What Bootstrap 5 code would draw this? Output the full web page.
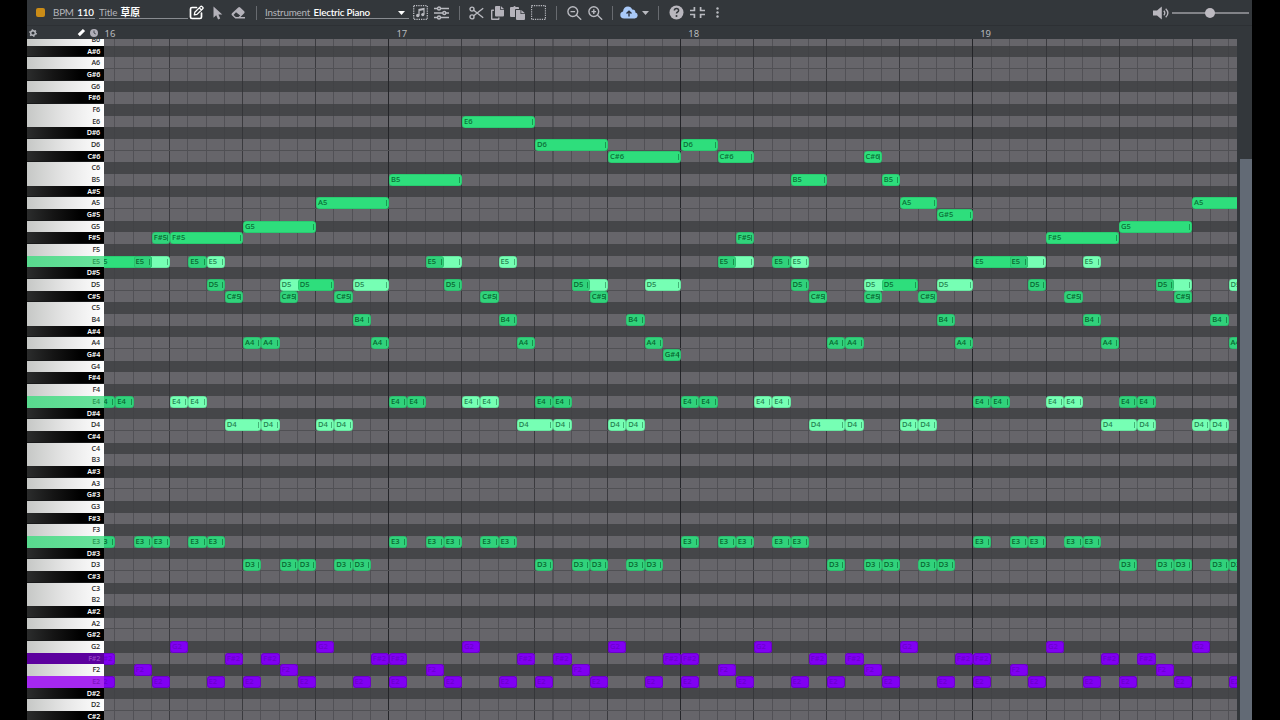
<!DOCTYPE html>
<html lang="en">
<head>
<meta charset="utf-8">
<meta name="viewport" content="width=device-width, initial-scale=1">
<title>Piano roll</title>
<link href="https://cdn.jsdelivr.net/npm/bootstrap@5.3.0/dist/css/bootstrap.min.css" rel="stylesheet">
<style>
:root { --step: 18.26px; --lane: 11.683px; }
body { background: #000; font-family: "Noto Sans", "Noto Sans CJK SC", sans-serif; color: #fff; height: 720px; overflow: hidden; }
.app { width: 1225px; height: 720px; margin-left: 27px; background: #33373b; }
.toolbar { height: 26px; border-bottom: 1px solid #2d3034; color: #b4b5ba; font-family: Lato, "Noto Sans CJK SC", sans-serif; font-size: 9.8px; line-height: 1; letter-spacing: -.2px; }
.toolbar svg, .ruler svg { display: block; flex: none; }
.field { height: 14px; border-bottom: 1px solid #888b90; gap: 3.5px; white-space: nowrap; margin-top: -1px; flex: none; padding-top: 2px; }
.field b { color: #fff; font-weight: 600; }
.swatch { width: 9px; height: 9px; border-radius: 2px; background: #cb8c17; margin-left: 9px; flex: none; }
.sep { width: 1px; height: 14px; background: #686b70; flex: none; }
.slider { width: 77px; height: 2px; background: #828388; }
.knob { width: 10px; height: 10px; border-radius: 50%; background: #bdbac1; margin-left: 33px; flex: none; }
.ruler { height: 13px; color: #b8babe; }
.corner { width: 77px; flex: none; padding-left: 2px; }
.bars { font-size: 9.5px; line-height: 15px; }
.bars span { width: 291.9px; padding-left: .5px; flex: none; }
.bars span:last-child { flex: 1 1 0; }
.keys { width: 77px; flex: none; }
.rollclip { width: 1132.5px; flex: none; background: #454649; }
.shift { margin-top: -5px; }
.pkey { height: var(--lane); font-size: 7.2px; line-height: 11.6px; text-align: right; padding-right: 4px; font-weight: 500; letter-spacing: -.15px; }
.pkey.ivory { background: linear-gradient(90deg, #c6c8c6, #e6e6e6 50%, #fff); color: #222; }
.pkey.ebony { background: linear-gradient(90deg, #2b2c2c, #141414 35%, #000 70%); color: #fff; border-bottom: 1px solid #18191a; font-weight: 600; letter-spacing: -.25px; }
.pkey.lit { background: linear-gradient(90deg, #58d98e, #68e39b); color: #26934f; }
.pkey.litdark { background: #5c009e; color: #9440c4; border: 0; }
.pkey.litviolet { background: #a528f0; color: #7b13bb; }
.lane { display: grid; grid-template-columns: repeat(66, var(--step)); height: var(--lane); margin-left: -7.6px;
  background-color: #66656a;
  background-image:
    repeating-linear-gradient(90deg, rgba(28,29,33,.72) 0 1px, transparent 1px calc(var(--step) * 16)),
    repeating-linear-gradient(90deg, rgba(40,40,44,.55) 0 1px, transparent 1px calc(var(--step) * 4)),
    repeating-linear-gradient(90deg, rgba(45,45,50,.36) 0 1px, transparent 1px var(--step)); }
.lane.ruled { box-shadow: inset 0 -1px 0 #505054; }
.lane.off { background-color: #454649;
  background-image:
    repeating-linear-gradient(90deg, rgba(28,29,33,.72) 0 1px, transparent 1px calc(var(--step) * 16)),
    repeating-linear-gradient(90deg, rgba(38,39,43,.45) 0 1px, transparent 1px calc(var(--step) * 4)),
    repeating-linear-gradient(90deg, rgba(38,39,43,.12) 0 1px, transparent 1px var(--step)); }
.tone { grid-row: 1; height: 11.9px; margin: 0 -.6px 0 .6px; border-radius: 3.5px; font-size: 7.6px; line-height: 11.4px; padding-left: 2px; position: relative; white-space: nowrap;
  font-weight: 500; color: #0a6e36; background: #2ede7c; box-shadow: inset 0 0 0 .5px rgba(15,95,50,.3); }
.tone::after { content: ""; position: absolute; right: 2px; top: 3px; width: 1px; height: 6px; background: currentColor; opacity: .6; }
.tone.mid { background: #31d27b; color: #08652f; }
.tone.mint { background: #76ffb4; color: #24814f; }
.tone.violet { background: #8000f2; color: #6a00cc; box-shadow: inset 0 0 0 1px #6a00c8; }
.tone.violet::after { display: none; }
.thumb { width: 12px; margin-left: 3.5px; margin-top: 120px; background: #626a75; }
</style>
</head>
<body>
<div class="app d-flex flex-column overflow-hidden">
  <header class="toolbar d-flex align-items-center flex-shrink-0">
    <span class="swatch"></span>
    <div class="field d-flex align-items-center" style="margin-left:8px;width:42px"><span>BPM</span><b>110</b></div>
    <div class="field d-flex align-items-center" style="margin-left:4px;width:89px"><span>Title</span><b>草原</b></div>
    <svg style="margin-left:1px" width="16" height="15" viewBox="0 0 16 15" fill="none" stroke="#fff"><path d="M7.500 2.500H3Q1.500 2.500 1.500 4v8q0 1.500 1.500 1.500h8q1.500 0 1.500-1.500V8" stroke-width="1.700" stroke-linecap="round"/><path d="M5.300 9.900l.5-2.600 5.700-5.700q.8-.8 1.600 0l.6.6q.8.800 0 1.600L8 9.400zM10.300 2.900l2.100 2.100" stroke-width="1.300" stroke-linejoin="round"/></svg>
    <svg style="margin-left:8px" width="10" height="14" viewBox="0 0 10 14" fill="#b4b2ba"><path d="M.5.500v11.300l2.700-2.500 1.900 4.200 2.100-.9-1.800-4.200h3.900z"/></svg>
    <svg style="margin-left:8px" width="15" height="14" viewBox="0 0 15 14" fill="#b4b2ba"><path fill-rule="evenodd" d="M7.200 1.500q1-.9 2 0l4 3.800q.9 1 0 2L9.400 11H14v1.500H4.300L.9 9.200Q0 8.200 1 7.300zM5 6.300L2.500 8.900l2.300 2.200h2.700l1.700-1.500z"/></svg>
    <span class="sep" style="margin-left:10px"></span>
    <div class="field d-flex align-items-center" style="margin-left:8px;width:144px"><span>Instrument</span><b>Electric Piano</b><svg class="ms-auto" style="margin-right:4px" width="7" height="4" viewBox="0 0 7 4" fill="#fff"><path d="M0 0h7L3.500 4z"/></svg></div>
    <svg style="margin-left:4px" width="15" height="15" viewBox="0 0 15 15" fill="none" stroke="#b9bac0"><path d="M.7.700h13.600v13.600H.7z" stroke-width="1.300" stroke-dasharray="1.300 1"/><path d="M6 10.200V4.500l5-1v5.700M6 5.500l5-1" stroke-width="1.200"/><g fill="#b9bac0" stroke="none"><circle cx="4.800" cy="10.500" r="1.700"/><circle cx="9.800" cy="9.600" r="1.600"/></g></svg>
    <svg style="margin-left:6px" width="15" height="14" viewBox="0 0 15 14" fill="#33373b" stroke="#b9bac0" stroke-width="1.400"><path d="M0 2.500h15M0 7h15M0 11.500h15"/><circle cx="5" cy="2.500" r="1.500"/><circle cx="10.300" cy="7" r="1.500"/><circle cx="5" cy="11.500" r="1.500"/></svg>
    <span class="sep" style="margin-left:10px"></span>
    <svg style="margin-left:9px" width="15" height="14" viewBox="0 0 15 14" fill="none" stroke="#b9bac0" stroke-width="1.400"><circle cx="3" cy="3.100" r="2"/><circle cx="3" cy="10.900" r="2"/><path d="M4.700 4.300l9.500 7.400M4.700 9.700L14.200 2.300"/></svg>
    <svg style="margin-left:7px" width="13" height="14" viewBox="0 0 13 14" fill="#b4b2ba"><path d="M5 0h4v3.800h4v5.700q0 1-1 1H5q-1 0-1-1V1q0-1 1-1zM9.800 0L13 3H9.800z"/><path d="M2.900 3.500H1q-1 0-1 1V13q0 1 1 1h6.500q1 0 1-1v-1.400H7.200v1H1.400V4.900h1.500z"/></svg>
    <svg style="margin-left:6px" width="15" height="14" viewBox="0 0 15 14" fill="#b4b2ba"><path d="M0 2q0-1 1-1h2.300Q4.500-.8 5.800 1H8q1 0 1 1v1H6Q5 3 5 4v7H1q-1 0-1-1zM6 4h4.500v4H15v5q0 1-1 1H7q-1 0-1-1zM11.300 4L15 7.200h-3.700z"/></svg>
    <svg style="margin-left:6px" width="15" height="15" viewBox="0 0 15 15" fill="none" stroke="#b9bac0"><path d="M.6.600h13.800v13.800H.6z" stroke-width="1.100" stroke-dasharray="1.300 1"/></svg>
    <span class="sep" style="margin-left:10px"></span>
    <svg style="margin-left:9.500px" width="15" height="14" viewBox="0 0 15 14" fill="none" stroke="#b9bac0" stroke-width="1.400"><circle cx="5.800" cy="5.600" r="4.900"/><path d="M9.300 9.100l4.900 4.600M3.500 5.600h4.600"/></svg>
    <svg style="margin-left:6px" width="15" height="14" viewBox="0 0 15 14" fill="none" stroke="#b9bac0" stroke-width="1.400"><circle cx="5.800" cy="5.600" r="4.900"/><path d="M9.300 9.100l4.900 4.600M3.500 5.600h4.600M5.800 3.300v4.600"/></svg>
    <span class="sep" style="margin-left:9.500px"></span>
    <svg style="margin-left:7px" width="18" height="13" viewBox="0 0 18 13"><path fill="#a9c9f8" d="M4.200 12.600Q.3 12.300.3 8.900q0-2.700 2.700-3.300Q3.700.500 8 .500q3 0 4.200 2.900 3.200-.2 3.200 3 2.300.6 2.300 3t-2.900 3.200z"/><path d="M9 10.500V5.500M6.500 7.600L9 5.200l2.500 2.400" stroke="#2d3440" stroke-width="1.400" fill="none"/></svg>
    <svg style="margin-left:4px" width="7" height="4" viewBox="0 0 7 4" fill="#b9bac0"><path d="M0 0h7L3.500 4z"/></svg>
    <span class="sep" style="margin-left:9px"></span>
    <svg style="margin-left:10px" width="15" height="15" viewBox="0 0 15 15"><circle cx="7.500" cy="7.500" r="7" fill="#b9b7be"/><path d="M5.400 5.600q0-2 2.100-2t2.100 1.800q0 1-1.100 1.600-1 .5-1 1.600" stroke="#33373b" stroke-width="1.500" fill="none"/><circle cx="7.500" cy="11" r="1" fill="#33373b"/></svg>
    <svg style="margin-left:6px" width="15" height="11" viewBox="0 0 15 11" fill="none" stroke="#b9bac0" stroke-width="1.700"><path d="M0 3.500h4.400V0M15 3.500h-4.400V0M0 7.500h4.400V11M15 7.500h-4.400V11"/></svg>
    <svg style="margin-left:11px" width="3" height="11" viewBox="0 0 3 11" fill="#b9bac0"><circle cx="1.500" cy="1.500" r="1.200"/><circle cx="1.500" cy="5.500" r="1.200"/><circle cx="1.500" cy="9.500" r="1.200"/></svg>
    <svg class="ms-auto" width="17" height="14" viewBox="0 0 17 14"><path fill="#b9b7be" d="M0 4.500h4L8.800.500v13L4 9.500H0z"/><path d="M10.800 4.700q2 2.300 0 4.600M12.700 2.700q4.300 4.300 0 8.600" stroke="#b9b7be" stroke-width="1.300" fill="none"/></svg>
    <div class="slider d-flex align-items-center" style="margin:0 3px 0 2px"><span class="knob"></span></div>
  </header>

  <div class="ruler d-flex flex-shrink-0">
    <div class="corner d-flex align-items-center">
      <svg width="8" height="8" viewBox="0 0 8 8" fill="none" stroke="#b9bac0"><circle cx="4" cy="4" r="2.300" stroke-width="1.400"/><circle cx="4" cy="4" r="3.300" stroke-width="1.100" stroke-dasharray="1.500 1.960"/></svg>
      <svg style="margin-left:40px" width="9" height="9" viewBox="0 0 9 9"><path d="M1.800 7.200L7 2" stroke="#fff" stroke-width="3.100"/></svg>
      <svg style="margin-left:4px" width="8" height="8" viewBox="0 0 8 8"><circle cx="4" cy="4" r="4" fill="#b0aeb8"/><path d="M4 1.500V4l1.800 1" stroke="#444850" fill="none"/></svg>
    </div>
    <div class="bars d-flex flex-grow-1" id="bars"></div>
  </div>

  <main class="d-flex flex-grow-1 overflow-hidden">
    <div class="keys overflow-hidden"><div class="shift" id="keys"></div></div>
    <div class="rollclip overflow-hidden"><div class="shift" id="lanes"></div></div>
    <div class="thumb"></div>
  </main>
</div>

<script src="https://cdn.jsdelivr.net/npm/bootstrap@5.3.0/dist/js/bootstrap.bundle.min.js"></script>
<script>
const names = ['C','C#','D','D#','E','F','F#','G','G#','A','A#','B'];
const lit = { E5: 'lit', E4: 'lit', E3: 'lit', 'F#2': 'litdark', E2: 'litviolet' };
// Each entry: colour, then "start" or "start-end" in sixteenth notes from bar 16.
const song = {
  E6: [['', '20-24']],
  D6: [['', '24-28 32-34']],
  'C#6': [['', '28-32 34-36 42']],
  B5: [['', '16-20 38-40 43']],
  A5: [['', '12-16 44-46 60-64']],
  'G#5': [['', '46-48']],
  G5: [['', '8-12 56-60']],
  'F#5': [['mid', '3 35'], ['', '4-8 52-56']],
  E5: [['mint', '2-4 6 18-20 22 34-36 38 50-52 54'], ['', '0-3 48-51'], ['mid', '2 5 18 34 37 50']],
  D5: [['mint', '10-12 14-16 26-28 30-32 42-44 46-48 58-60 62-64'], ['', '11-13 43-45'], ['mid', '6 19 26 38 51 58']],
  'C#5': [['mid', '7 10 13 21 27 39 42 45 53 59']],
  B4: [['mid', '14 22 29 46 54 61']],
  A4: [['mid', '8 9 15 23 30 40 41 47 55 62']],
  'G#4': [['mid', '31']],
  E4: [['mid', '0 1 16 17 24 25 32 33 48 49 56 57'], ['mint', '4 5 20 21 36 37 52 53']],
  D4: [['mint', '7-9 9 12 13 23-25 25 28 29 39-41 41 44 45 55-57 57 60 61']],
  E3: [['mid', '0 2 3 5 6 16 18 19 21 22 32 34 35 37 38 48 50 51 53 54']],
  D3: [['mid', '8 10 11 13 14 24 26 27 29 30 40 42 43 45 46 56 58 59 61 62']],
  G2: [['violet', '4 12 20 28 36 44 52 60']],
  'F#2': [['violet', '0 7 9 15 16 23 25 31 32 39 41 47 48 55 57']],
  F2: [['violet', '2 10 18 26 34 42 50 58']],
  E2: [['violet', '0 3 6 8 11 14 16 19 22 24 27 30 32 35 38 40 43 46 48 51 54 56 59 62']]
};
const outOfScale = [0, 3, 5, 7, 10];
let keys = '', lanes = '';
for (let m = 95; m >= 37; m--) {
  const pc = m % 12, label = names[pc] + (Math.floor(m / 12) - 1);
  const ebony = names[pc].length > 1;
  keys += `<div class="pkey ${ebony ? 'ebony' : 'ivory'} ${lit[label] || ''}">${label}</div>`;
  const off = outOfScale.includes(pc);
  let tones = '';
  for (const [tint, spans] of song[label] || []) {
    for (const s of spans.split(' ')) {
      const [a, b = +a + 1] = s.split('-').map(Number);
      tones += `<div class="tone ${tint}" style="grid-column:${a + 1}/${b + 1}">${label}</div>`;
    }
  }
  lanes += `<div class="lane ${off ? 'off' : ''} ${pc === 9 || pc === 2 ? 'ruled' : ''}">${tones}</div>`;
}
document.getElementById('keys').innerHTML = keys;
document.getElementById('lanes').innerHTML = lanes;
document.getElementById('bars').innerHTML = [16, 17, 18, 19].map(n => `<span>${n}</span>`).join('');
</script>
</body>
</html>
